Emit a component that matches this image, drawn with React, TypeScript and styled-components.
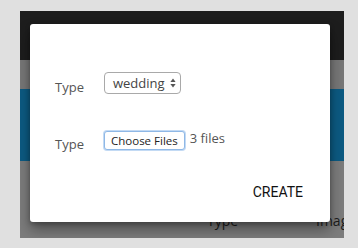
import styled, { createGlobalStyle } from 'styled-components';

const GlobalStyle = createGlobalStyle`
  html, body {
    margin: 0;
    padding: 0;
    background: #e0e0e0;
  }
  body {
    font-family: 'Open Sans', 'Liberation Sans', sans-serif;
  }
`;

function App() {
  return (
    <>
      <GlobalStyle />
      <Page>
        <Frame>
          <Band $height={49} $color='#1d1d1d' />
          <Band $height={29} $color='#777777' />
          <Band $height={72} $color='#0c5a82' />
          <TableBand>
            <HeadCell $width={109}>Type</HeadCell>
            <HeadCell>Imag</HeadCell>
          </TableBand>

          <Modal>
            <FieldRow $gap={35}>
              <Label>Type</Label>
              <SelectBox>
                wedding
                <Arrows viewBox='0 0 6 10' width='6' height='10'>
                  <path d='M3 0.5 L5.6 4 H0.4 Z' fill='#555' />
                  <path d='M3 9.5 L5.6 6 H0.4 Z' fill='#555' />
                </Arrows>
              </SelectBox>
            </FieldRow>
            <FieldRow $gap={0}>
              <Label>Type</Label>
              <FileButton type='button'>Choose Files</FileButton>
              <FileCount>3 files</FileCount>
            </FieldRow>
            <Actions>
              <TextButton type='button'>CREATE</TextButton>
            </Actions>
          </Modal>
        </Frame>
      </Page>
    </>
  );
}

export default App;

const Page = styled.div`
  width: 358px;
  height: 248px;
  padding: 11px 0 0 20px;
  box-sizing: border-box;
`;

const Frame = styled.div`
  position: relative;
  width: 324px;
  height: 227px;
  display: flex;
  flex-direction: column;
  overflow: hidden;
`;

const Band = styled.div<{ $height: number; $color: string }>`
  height: ${({ $height }) => $height}px;
  background: ${({ $color }) => $color};
  flex-shrink: 0;
`;

const TableBand = styled.div`
  flex: 1;
  background: #7c7c7c;
  display: flex;
  align-items: flex-end;
  padding: 0 0 8px 187px;
  font-size: 14px;
  color: #1c1c1c;
  white-space: nowrap;
`;

const HeadCell = styled.span<{ $width?: number }>`
  width: ${({ $width }) => ($width ? `${$width}px` : 'auto')};
  flex-shrink: 0;
`;

const Modal = styled.div`
  position: absolute;
  left: 10px;
  top: 13px;
  width: 300px;
  height: 198px;
  box-sizing: border-box;
  background: #ffffff;
  border-radius: 3px;
  box-shadow: 0 8px 14px rgb(0 0 0 / 35%), 0 2px 5px rgb(0 0 0 / 25%);
  padding: 48px 19px 0 25px;
  display: flex;
  flex-direction: column;
`;

const FieldRow = styled.div<{ $gap: number }>`
  display: flex;
  align-items: center;
  height: 22px;
  margin-bottom: ${({ $gap }) => $gap}px;
`;

const Label = styled.span`
  width: 49px;
  font-size: 13px;
  line-height: 14px;
  color: #555555;
  margin-top: 7px;
`;

const SelectBox = styled.div`
  height: 22px;
  box-sizing: border-box;
  display: flex;
  align-items: center;
  gap: 5px;
  padding: 0 4px 0 8px;
  border: 1px solid #a9a9a9;
  border-radius: 4px;
  font-size: 13px;
  color: #444444;
`;

const Arrows = styled.svg`
  display: block;
`;

const FileButton = styled.button`
  height: 19px;
  box-sizing: border-box;
  padding: 0 6px;
  border: 1px solid #8fb8e6;
  border-radius: 3px;
  box-shadow: 0 0 0 1px #c3daf4;
  background: #ffffff;
  font-family: 'Open Sans', 'Liberation Sans', sans-serif;
  font-size: 11.5px;
  color: #222222;
  line-height: 17px;
`;

const FileCount = styled.span`
  margin-left: 5px;
  font-size: 13px;
  color: #555555;
  margin-bottom: 4px;
`;

const Actions = styled.div`
  display: flex;
  justify-content: flex-end;
  margin-top: 33px;
`;

const TextButton = styled.button`
  border: none;
  background: none;
  padding: 0 8px;
  font-family: Roboto, 'Liberation Sans', sans-serif;
  font-size: 14px;
  font-weight: 400;
  line-height: 17px;
  color: #111111;
`;
